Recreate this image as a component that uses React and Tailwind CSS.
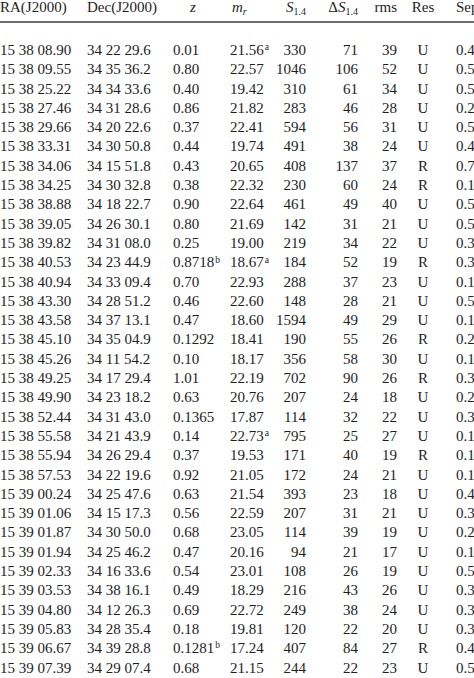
import React from "react";

const rows = [
  ["15 38 08.90", "34 22 29.6", "0.01", "", "21.56", "a", "330", "71", "39", "U", "0.4"],
  ["15 38 09.55", "34 35 36.2", "0.80", "", "22.57", "", "1046", "106", "52", "U", "0.5"],
  ["15 38 25.22", "34 34 33.6", "0.40", "", "19.42", "", "310", "61", "34", "U", "0.5"],
  ["15 38 27.46", "34 31 28.6", "0.86", "", "21.82", "", "283", "46", "28", "U", "0.2"],
  ["15 38 29.66", "34 20 22.6", "0.37", "", "22.41", "", "594", "56", "31", "U", "0.5"],
  ["15 38 33.31", "34 30 50.8", "0.44", "", "19.74", "", "491", "38", "24", "U", "0.4"],
  ["15 38 34.06", "34 15 51.8", "0.43", "", "20.65", "", "408", "137", "37", "R", "0.7"],
  ["15 38 34.25", "34 30 32.8", "0.38", "", "22.32", "", "230", "60", "24", "R", "0.1"],
  ["15 38 38.88", "34 18 22.7", "0.90", "", "22.64", "", "461", "49", "40", "U", "0.5"],
  ["15 38 39.05", "34 26 30.1", "0.80", "", "21.69", "", "142", "31", "21", "U", "0.5"],
  ["15 38 39.82", "34 31 08.0", "0.25", "", "19.00", "", "219", "34", "22", "U", "0.3"],
  ["15 38 40.53", "34 23 44.9", "0.8718", "b", "18.67", "a", "184", "52", "19", "R", "0.3"],
  ["15 38 40.94", "34 33 09.4", "0.70", "", "22.93", "", "288", "37", "23", "U", "0.1"],
  ["15 38 43.30", "34 28 51.2", "0.46", "", "22.60", "", "148", "28", "21", "U", "0.5"],
  ["15 38 43.58", "34 37 13.1", "0.47", "", "18.60", "", "1594", "49", "29", "U", "0.1"],
  ["15 38 45.10", "34 35 04.9", "0.1292", "", "18.41", "", "190", "55", "26", "R", "0.2"],
  ["15 38 45.26", "34 11 54.2", "0.10", "", "18.17", "", "356", "58", "30", "U", "0.1"],
  ["15 38 49.25", "34 17 29.4", "1.01", "", "22.19", "", "702", "90", "26", "R", "0.3"],
  ["15 38 49.90", "34 23 18.2", "0.63", "", "20.76", "", "207", "24", "18", "U", "0.2"],
  ["15 38 52.44", "34 31 43.0", "0.1365", "", "17.87", "", "114", "32", "22", "U", "0.3"],
  ["15 38 55.58", "34 21 43.9", "0.14", "", "22.73", "a", "795", "25", "27", "U", "0.1"],
  ["15 38 55.94", "34 26 29.4", "0.37", "", "19.53", "", "171", "40", "19", "R", "0.1"],
  ["15 38 57.53", "34 22 19.6", "0.92", "", "21.05", "", "172", "24", "21", "U", "0.1"],
  ["15 39 00.24", "34 25 47.6", "0.63", "", "21.54", "", "393", "23", "18", "U", "0.4"],
  ["15 39 01.06", "34 15 17.3", "0.56", "", "22.59", "", "207", "31", "21", "U", "0.3"],
  ["15 39 01.87", "34 30 50.0", "0.68", "", "23.05", "", "114", "39", "19", "U", "0.2"],
  ["15 39 01.94", "34 25 46.2", "0.47", "", "20.16", "", "94", "21", "17", "U", "0.1"],
  ["15 39 02.33", "34 16 33.6", "0.54", "", "23.01", "", "108", "26", "19", "U", "0.5"],
  ["15 39 03.53", "34 38 16.1", "0.49", "", "18.29", "", "216", "43", "26", "U", "0.3"],
  ["15 39 04.80", "34 12 26.3", "0.69", "", "22.72", "", "249", "38", "24", "U", "0.3"],
  ["15 39 05.83", "34 28 35.4", "0.18", "", "19.81", "", "120", "22", "20", "U", "0.3"],
  ["15 39 06.67", "34 39 28.8", "0.1281", "b", "17.24", "", "407", "84", "27", "R", "0.4"],
  ["15 39 07.39", "34 29 07.4", "0.68", "", "21.15", "", "244", "22", "23", "U", "0.5"],
];

const cols =
  "grid grid-cols-[87px_86px_57px_40px_36px_52px_39px_52px_60px]";

function Sup({ children }) {
  if (!children) return null;
  return <sup className="text-[9.5px] ml-[1px]">{children}</sup>;
}

export default function App() {
  return (
    <div
      className="w-[474px] h-[678px] overflow-hidden bg-white text-[#1e1e1e] text-[15px]"
      style={{ fontFamily: '"Liberation Serif", "Times New Roman", serif' }}
    >
      <div className="w-[520px]">
        <div className={`${cols} h-[14px] leading-[14px] whitespace-nowrap`}>
          <div>RA(J2000)</div>
          <div>Dec(J2000)</div>
          <div className="pl-[17px] italic">z</div>
          <div className="pl-[2px] italic">
            m<sub className="text-[10px]">r</sub>
          </div>
          <div className="text-right">
            <span className="italic">S</span>
            <sub className="text-[10px]">1.4</sub>
          </div>
          <div className="text-right">
            Δ<span className="italic">S</span>
            <sub className="text-[10px]">1.4</sub>
          </div>
          <div className="text-right">rms</div>
          <div className="text-center">Res</div>
          <div className="pl-[7px]">Sep</div>
        </div>
        <div className="h-[2px] mt-[7px] mb-[18px] bg-[#6e6e6e]" />
        {rows.map((r) => (
          <div
            key={r[0]}
            className={`${cols} h-[19.3px] leading-[19.3px] whitespace-nowrap`}
          >
            <div>{r[0]}</div>
            <div>{r[1]}</div>
            <div>
              {r[2]}
              <Sup>{r[3]}</Sup>
            </div>
            <div>
              {r[4]}
              <Sup>{r[5]}</Sup>
            </div>
            <div className="text-right">{r[6]}</div>
            <div className="text-right">{r[7]}</div>
            <div className="text-right">{r[8]}</div>
            <div className="text-center">{r[9]}</div>
            <div className="pl-[7px]">{r[10]}</div>
          </div>
        ))}
      </div>
    </div>
  );
}
